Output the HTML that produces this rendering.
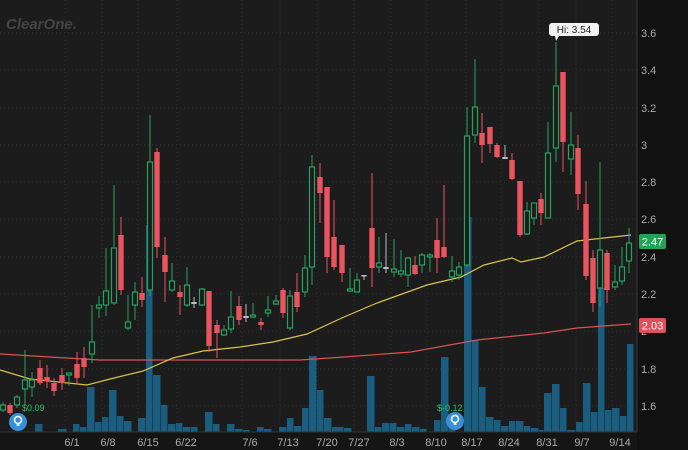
<!DOCTYPE html>
<html><head><meta charset="utf-8"><style>
html,body{margin:0;padding:0;background:#1c1c1c;}
svg{display:block;}
text{font-family:"Liberation Sans",sans-serif;}
</style></head><body>
<svg id="s" width="688" height="450" xmlns="http://www.w3.org/2000/svg">
<rect x="0" y="0" width="688" height="450" fill="#1c1c1c"/>
<rect x="637" y="0" width="51" height="450" fill="#111"/>
<rect x="0" y="432" width="637" height="18" fill="#151515"/>
<g id="grid"></g>
<g id="vol"></g>
<polyline fill="none" stroke="#d9534f" stroke-width="1.2" points="0,354 100,360 217,360 300,360 344,357 411,352 477,340 544,333 577,328 631,324"/>
<polyline fill="none" stroke="#d8c34a" stroke-width="1.2" points="0,370 30,379 87,385 110,379 143,371 173,358 203,351 240,347 273,342 307,334 344,317 377,303 427,285 461,277 484,265 512,258 521,262 544,257 577,241 631,235"/>
<g id="cd"></g>
<line x1="637" y1="0" x2="637" y2="432" stroke="#3a3a3a"/>
<line x1="0" y1="432" x2="637" y2="432" stroke="#333"/>
<text x="6" y="29" font-size="15" font-weight="bold" font-style="italic" fill="#444">ClearOne.</text>
<g id="ylab" font-size="11" fill="#aaa"></g>
<g id="xlab" font-size="11" fill="#aaa" text-anchor="middle"></g>
<rect x="639" y="234" width="27" height="15" rx="2" fill="#23a455"/>
<text x="652.5" y="245.5" font-size="11" fill="#fff" text-anchor="middle">2.47</text>
<rect x="639" y="318" width="27" height="15" rx="2" fill="#e0505a"/>
<text x="652.5" y="329.5" font-size="11" fill="#fff" text-anchor="middle">2.03</text>
<path d="M552,23 h44 a3,3 0 0 1 3,3 v7 a3,3 0 0 1 -3,3 h-37 l-3,5 l-1,-5 h-3 a3,3 0 0 1 -3,-3 v-7 a3,3 0 0 1 3,-3z" fill="#f2f2f2"/>
<text x="574" y="33" font-size="10" fill="#222" text-anchor="middle">Hi: 3.54</text>
<text x="22" y="411" font-size="9" fill="#2fbf6a" font-family="Liberation Mono">$0.09</text>
<text x="437" y="411" font-size="9" fill="#2fbf6a" font-family="Liberation Mono">$-0.12</text>
<circle cx="18" cy="422" r="9" fill="#3b8fd6"/>
<circle cx="18" cy="420" r="3.5" fill="none" stroke="#fff" stroke-width="1.5"/>
<line x1="16.5" y1="425" x2="19.5" y2="425" stroke="#fff" stroke-width="1.5"/>
<circle cx="455" cy="421" r="9" fill="#3b8fd6"/>
<circle cx="455" cy="419" r="3.5" fill="none" stroke="#fff" stroke-width="1.5"/>
<line x1="453.5" y1="424" x2="456.5" y2="424" stroke="#fff" stroke-width="1.5"/>
</svg>
<script>
var NS="http://www.w3.org/2000/svg";
function el(p,t,a){var e=document.createElementNS(NS,t);for(var k in a)e.setAttribute(k,a[k]);document.getElementById(p).appendChild(e);return e;}
var ys=[[3.6,33],[3.4,70],[3.2,108],[3,145],[2.8,182],[2.6,219],[2.4,257],[2.2,294],[2,331],[1.8,369],[1.6,406]];
ys.forEach(function(v){el("grid","line",{x1:0,x2:637,y1:v[1],y2:v[1],stroke:"#2e2e2e","stroke-dasharray":"1,3"});
 var t=el("ylab","text",{x:641,y:v[1]+4});t.textContent=(v[0]==3||v[0]==2)?String(v[0]):v[0].toFixed(1);});
var gx=[65,102,138,177,242,280,317,354,391,427,466,501,539,576,612];
gx.forEach(function(x){el("grid","line",{x1:x,x2:x,y1:0,y2:432,stroke:"#2e2e2e","stroke-dasharray":"1,3"});});
var xl=[["6/1",72],["6/8",108],["6/15",148],["6/22",186],["7/6",250],["7/13",288],["7/20",327],["7/27",359],["8/3",397],["8/10",436],["8/17",472],["8/24",509],["8/31",547],["9/7",582],["9/14",620]];
xl.forEach(function(v){var t=el("xlab","text",{x:v[1],y:446});t.textContent=v[0];});
var vol=[[35,43,424],[58,67,429],[73,80,424],[80,87,427],[87,95,387],[95,102,422],[102,109,417],[109,117,390],[117,124,416],[124,132,421],[138,146,418],[146,153,225],[153,161,375],[161,168,405],[168,176,424],[176,183,423],[183,191,427],[191,198,427],[205,213,412],[213,220,424],[227,235,424],[235,243,429],[243,250,430],[257,264,427],[264,272,429],[279,287,427],[287,294,418],[294,302,426],[302,309,408],[309,317,356],[317,324,390],[324,332,418],[332,344,427],[344,352,428],[367,375,376],[375,382,427],[382,390,423],[390,397,423],[397,405,427],[405,412,424],[412,420,427],[420,427,429],[434,441,420],[441,449,357],[449,456,425],[464,472,217],[472,479,340],[479,486,387],[486,494,417],[494,501,420],[501,509,426],[509,516,421],[516,524,421],[524,531,426],[531,539,428],[539,544,430],[544,552,393],[552,560,384],[560,567,408],[567,576,430],[576,583,422],[583,591,383],[591,598,412],[598,605,288],[605,612,410],[612,620,408],[620,627,416],[627,634,344]];
vol.forEach(function(v){el("vol","rect",{x:v[0],y:v[2],width:v[1]-v[0]-0.5,height:432-v[2],fill:"#1a5d7f"});});
var C=[["g",3,405,410,402,412],["r",10,405,413,403,415],["g",17,397,405,395,408],["g",25,380,389,350,405],["g",32,380,387,372,397],["r",40,368,383,360,385],["r",47,377,381,365,388],["r",54,383,391,378,396],["r",62,375,383,368,390],["g",69,373,375,373,386],["r",77,364,378,352,383],["r",84,358,367,347,378],["g",92,342,354,305,363],["g",99,305,308,296,318],["g",106,291,305,248,316],["g",114,248,303,185,305],["r",121,235,290,217,295],["g",128,322,328,295,330],["g",135,292,305,282,320],["r",142,293,300,277,307],["g",150,162,290,115,296],["r",157,152,247,148,258],["r",165,255,272,237,302],["g",172,281,290,263,292],["r",180,292,297,285,315],["g",187,285,305,267,307],["w",194,302,304,297,308],["g",202,289,305,288,306],["r",209,291,346,291,352],["r",217,325,333,320,358],["g",224,330,335,325,336],["g",231,317,329,291,333],["r",239,306,320,296,325],["w",246,316,318,304,322],["g",253,315,317,303,318],["r",261,322,325,318,330],["g",268,310,313,296,317],["g",276,301,304,295,305],["r",283,290,313,288,318],["g",290,296,328,290,330],["r",297,292,307,273,312],["g",305,268,292,255,297],["g",312,167,267,155,285],["r",320,177,193,163,223],["r",327,187,257,187,273],["r",334,237,267,200,270],["r",342,245,273,245,282],["g",350,289,291,268,292],["g",357,280,292,273,292],["w",364,275,276,275,280],["r",372,228,268,173,287],["g",379,263,267,237,273],["w",386,267,269,233,273],["g",394,269,272,239,277],["g",401,271,274,250,277],["g",408,258,275,257,287],["r",415,265,274,256,275],["g",422,255,265,253,273],["g",430,255,257,253,272],["r",437,240,258,218,273],["r",444,247,257,185,258],["g",452,271,277,256,282],["g",459,267,275,262,280],["g",467,136,265,107,267],["g",475,107,135,59,143],["r",482,133,145,113,163],["r",490,127,144,127,153],["r",497,145,157,143,158],["w",505,157,159,145,159],["r",512,160,179,153,180],["r",520,181,235,181,237],["g",527,211,234,202,235],["g",534,203,218,203,225],["r",541,199,213,193,225],["g",548,153,218,122,218],["g",556,86,148,42,162],["r",563,72,142,72,172],["g",571,145,159,112,175],["r",578,148,194,135,210],["r",586,204,276,181,280],["r",593,258,303,250,312],["g",600,250,288,162,307],["r",607,253,290,250,303],["g",615,282,287,265,290],["g",622,267,281,247,285],["g",629,243,261,228,273]];
C.forEach(function(c){var col=c[0]=="g"?"#27a060":c[0]=="r"?"#e9545f":"#bbb";
 el("cd","line",{x1:c[1],x2:c[1],y1:c[4],y2:c[5],stroke:col,"stroke-width":1});
 var h=Math.max(c[3]-c[2],1.5);
 if(c[0]=="g")el("cd","rect",{x:c[1]-2.5,y:c[2],width:5,height:h,fill:"#1c1c1c",stroke:col,"stroke-width":1.2});
 else el("cd","rect",{x:c[1]-2.7,y:c[2],width:5.4,height:h,fill:col});
});
</script>
</body></html>
